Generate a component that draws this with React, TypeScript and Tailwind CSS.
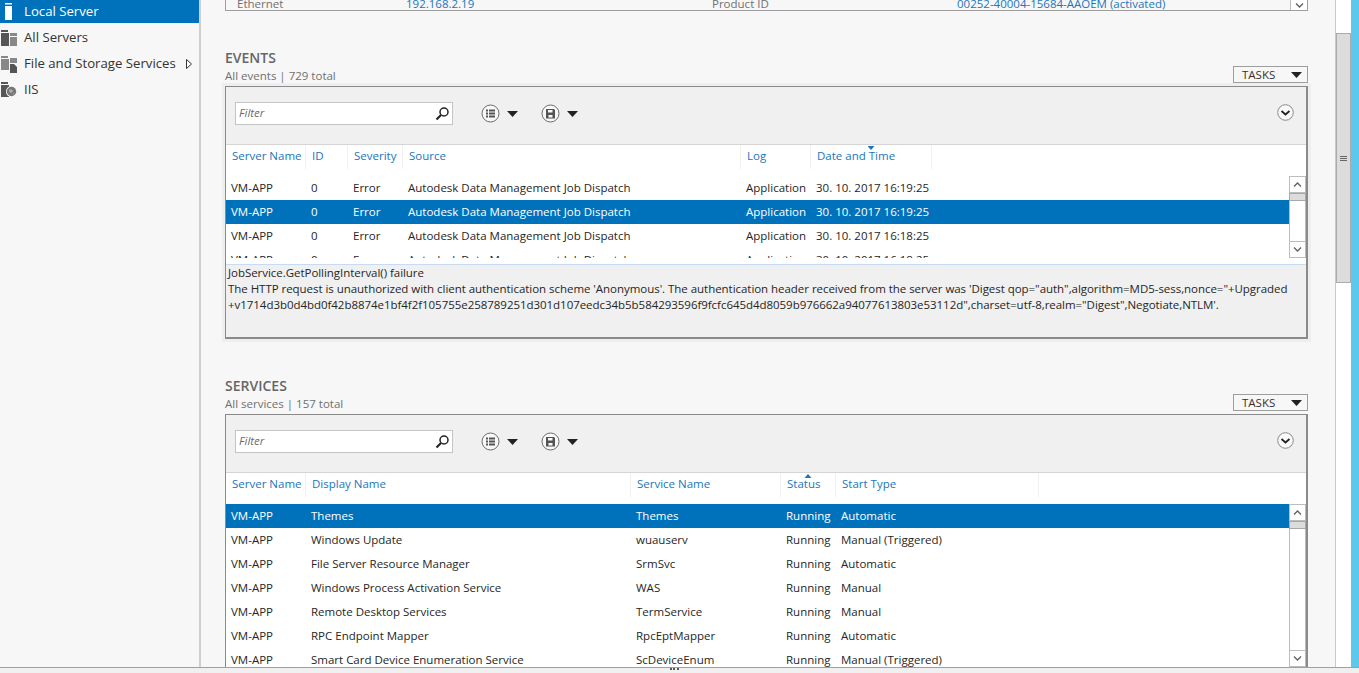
const FONT = "font-['Open_Sans','Noto_Sans',sans-serif]";

type Col = { label: string; sort?: "up" | "down" };

const eventCols: Col[] = [
  { label: "Server Name" },
  { label: "ID" },
  { label: "Severity" },
  { label: "Source" },
  { label: "Log" },
  { label: "Date and Time", sort: "down" },
];

const serviceCols: Col[] = [
  { label: "Server Name" },
  { label: "Display Name" },
  { label: "Service Name" },
  { label: "Status", sort: "up" },
  { label: "Start Type" },
];

const eventRows = [
  { cells: ["VM-APP", "0", "Error", "Autodesk Data Management Job Dispatch", "Application", "30. 10. 2017 16:19:25"] },
  { cells: ["VM-APP", "0", "Error", "Autodesk Data Management Job Dispatch", "Application", "30. 10. 2017 16:19:25"], selected: true },
  { cells: ["VM-APP", "0", "Error", "Autodesk Data Management Job Dispatch", "Application", "30. 10. 2017 16:18:25"] },
  { cells: ["VM-APP", "0", "Error", "Autodesk Data Management Job Dispatch", "Application", "30. 10. 2017 16:18:25"] },
];

const serviceRows = [
  { cells: ["VM-APP", "Themes", "Themes", "Running", "Automatic"], selected: true },
  { cells: ["VM-APP", "Windows Update", "wuauserv", "Running", "Manual (Triggered)"] },
  { cells: ["VM-APP", "File Server Resource Manager", "SrmSvc", "Running", "Automatic"] },
  { cells: ["VM-APP", "Windows Process Activation Service", "WAS", "Running", "Manual"] },
  { cells: ["VM-APP", "Remote Desktop Services", "TermService", "Running", "Manual"] },
  { cells: ["VM-APP", "RPC Endpoint Mapper", "RpcEptMapper", "Running", "Automatic"] },
  { cells: ["VM-APP", "Smart Card Device Enumeration Service", "ScDeviceEnum", "Running", "Manual (Triggered)"] },
];

function Caret({ className = "" }: { className?: string }) {
  return (
    <svg width="11" height="6" viewBox="0 0 11 6" className={className}>
      <path d="M0 0h11L5.5 6z" fill="#222" />
    </svg>
  );
}

function Toolbar() {
  return (
    <div className="h-[58px] shrink-0 bg-[#f0f0f0] border-b border-[#d5d5d5] flex items-start pt-[15px] pl-[9px] pr-[12px]">
      <div className="w-[218px] h-[23px] bg-white border border-[#c4c4c4] flex items-center justify-between pl-[3px] pr-[2px]">
        <span className="text-[11.5px] italic text-[#6d6d6d] pb-[2px]">Filter</span>
        <svg width="15" height="15" viewBox="0 0 15 15">
          <circle cx="9" cy="6" r="4" fill="none" stroke="#222" strokeWidth="1.5" />
          <path d="M6 9l-4.5 4.5" stroke="#222" strokeWidth="2.2" />
        </svg>
      </div>
      <div className="ml-[28px] mt-[2px] flex items-center gap-[7px]">
        <svg width="19" height="19" viewBox="0 0 19 19">
          <circle cx="9.5" cy="9.5" r="8.5" fill="#f8f8f8" stroke="#6a6a6a" />
          <path d="M5 5.500h2v2H5zM5 8.500h2v2H5zM5 11.500h2v2H5z" fill="#555" />
          <path d="M8 5.500h6v2H8zM8 8.500h6v2H8zM8 11.500h6v2H8z" fill="#555" />
        </svg>
        <Caret />
      </div>
      <div className="ml-[23px] mt-[2px] flex items-center gap-[7px]">
        <svg width="19" height="19" viewBox="0 0 19 19">
          <circle cx="9.5" cy="9.5" r="8.5" fill="#f8f8f8" stroke="#6a6a6a" />
          <path d="M5 5h8l1 1v8.500H5z" fill="#555" />
          <path d="M7 6h4.500v2.500H7z" fill="#f8f8f8" />
          <path d="M7.500 11H11.500V13.500H7.500z" fill="#f8f8f8" />
        </svg>
        <Caret />
      </div>
      <div className="ml-auto mt-[2px]">
        <svg width="17" height="17" viewBox="0 0 17 17">
          <circle cx="8.500" cy="8.500" r="7.800" fill="#f8f8f8" stroke="#8a8a8a" />
          <path d="M4.500 7l4 3.500 4-3.500" fill="none" stroke="#222" strokeWidth="1.800" />
        </svg>
      </div>
    </div>
  );
}

function Header({ cols, grid }: { cols: Col[]; grid: string }) {
  return (
    <div className={`grid ${grid} h-[31px] shrink-0 bg-white`}>
      {cols.map((c) => (
        <div key={c.label} className="relative h-[24px] border-r border-[#f0f0f0] pl-[6px] pt-[2px] text-[11.5px] text-[#1a76bd] whitespace-nowrap">
          {c.sort && (
            <svg width="7" height="4" viewBox="0 0 7 4" className="absolute left-1/2 -translate-x-1/2 top-[1px]">
              <path d={c.sort === "down" ? "M0 0h7L3.500 4z" : "M0 4h7L3.500 0z"} fill="#1a76bd" />
            </svg>
          )}
          {c.label}
        </div>
      ))}
    </div>
  );
}

function VScroll({ className }: { className: string }) {
  return (
    <div className={`w-[17px] shrink-0 border-x border-[#bdbdbd] bg-white flex flex-col ${className}`}>
      <div className="h-[17px] shrink-0 border-y border-[#bdbdbd] flex items-center justify-center">
        <svg width="9" height="5" viewBox="0 0 9 5">
          <path d="M1 4.500l3.500-3.500 3.500 3.500" fill="none" stroke="#606060" strokeWidth="1.300" />
        </svg>
      </div>
      <div className="h-2 shrink-0 bg-[#dcdcdc] border border-[#a8a8a8] -mx-px" />
      <div className="flex-1" />
      <div className="h-[17px] shrink-0 border-y border-[#bdbdbd] flex items-center justify-center">
        <svg width="9" height="5" viewBox="0 0 9 5">
          <path d="M1 .5l3.500 3.500 3.500-3.500" fill="none" stroke="#606060" strokeWidth="1.300" />
        </svg>
      </div>
    </div>
  );
}

function Rows({ rows, grid, className = "" }: { rows: { cells: string[]; selected?: boolean }[]; grid: string; className?: string }) {
  return (
    <div className={`flex-1 min-w-0 overflow-hidden ${className}`}>
      {rows.map((r, i) => (
        <div
          key={i}
          className={`grid ${grid} h-6 items-center text-[11.5px] whitespace-nowrap ${r.selected ? "bg-[#0072bc] text-white" : "text-[#262626]"}`}
        >
          {r.cells.map((c, j) => (
            <div key={j} className="pl-[5px] overflow-visible">{c}</div>
          ))}
        </div>
      ))}
    </div>
  );
}

function SectionHead({ title, sub }: { title: string; sub: string }) {
  return (
    <div className="flex items-end justify-between h-[41px]">
      <div>
        <div className="text-[14px] leading-[18px] font-semibold text-[#666]">{title}</div>
        <div className="text-[11.5px] leading-[17px] text-[#707070] mb-[2px]">{sub}</div>
      </div>
      <div className="w-[75px] h-[17px] border border-[#9e9e9e] flex items-center justify-between pl-2 pr-[5px] text-[11.5px] text-[#333] mb-[3px]">
        TASKS
        <Caret />
      </div>
    </div>
  );
}

function NavIcon({ kind }: { kind: string }) {
  if (kind === "local") {
    return (
      <svg width="18" height="17" viewBox="0 0 18 17">
        <path d="M4 0h7v1.500H4zM4 3h7v14H4z" fill="#fff" />
      </svg>
    );
  }
  if (kind === "all") {
    return (
      <svg width="18" height="17" viewBox="0 0 18 17">
        <path d="M0 0h7v2H0z" fill="#555" />
        <path d="M0 3h8v13H0z" fill="#555" />
        <path d="M9 3h7v3H9z" fill="#888" />
        <path d="M9 7h7v9H9z" fill="#888" />
      </svg>
    );
  }
  if (kind === "files") {
    return (
      <svg width="18" height="17" viewBox="0 0 18 17">
        <path d="M0 0h7v2H0z" fill="#888" />
        <path d="M0 3h8v11H0z" fill="#888" />
        <path d="M9 2h7v5h-7z" fill="#888" />
        <path d="M9 8h4l3 3v6H9z" fill="#555" />
      </svg>
    );
  }
  return (
    <svg width="18" height="17" viewBox="0 0 18 17">
      <path d="M0 0h7v2H0z" fill="#555" />
      <path d="M0 3h8v12H0z" fill="#555" />
      <circle cx="10.500" cy="9.500" r="5.500" fill="#f7f7f7" />
      <circle cx="10.500" cy="9.500" r="4.700" fill="#777" />
      <path d="M8 7.500h3l1 2-2 1.500-1.500-1zM12 11.500h1.500l-1 1.500z" fill="#b0b0b0" />
    </svg>
  );
}

function NavItem({ kind, label, active, arrow }: { kind: string; label: string; active?: boolean; arrow?: boolean }) {
  return (
    <div className={`flex items-center text-[13.2px] pl-[1px] whitespace-nowrap ${active ? "h-[24px] mb-[2px] pt-[1px] bg-[#0072bc] text-white" : "h-[26px] text-[#333]"}`}>
      <div className="w-[23px]"><NavIcon kind={kind} /></div>
      <span>{label}</span>
      {arrow && (
        <svg width="6" height="10" viewBox="0 0 6 10" className="ml-[10px]">
          <path d="M.5.5l5 4.500-5 4.500z" fill="#fff" stroke="#333" />
        </svg>
      )}
    </div>
  );
}

const eventGrid = "grid-cols-[80px_42px_55px_338px_70px_121px_1fr]";
const serviceGrid = "grid-cols-[80px_325px_150px_55px_203px_1fr]";

export default function App() {
  return (
    <div className={`${FONT} w-[1359px] h-[673px] overflow-hidden flex flex-col bg-white`}>
      <div className="flex h-[667px]">
        <aside className="w-[201px] shrink-0 bg-[#f7f7f7] border-r-2 border-[#d0d0d0] -mt-[1px]">
          <NavItem kind="local" label="Local Server" active />
          <NavItem kind="all" label="All Servers" />
          <NavItem kind="files" label="File and Storage Services" arrow />
          <NavItem kind="iis" label="IIS" />
        </aside>

        <main className="w-[1135px] shrink-0 bg-[#f7f7f7] border-r border-[#c8c8c8] pl-[24px] pr-[27px] overflow-hidden">
          {/* clipped properties panel */}
          <div className="h-[11px] border-x border-b border-[#9e9e9e] flex overflow-hidden text-[11.5px] leading-[8px] whitespace-nowrap">
            <div className="grid grid-cols-[169px_306px_245px_1fr] flex-1 pl-[11px]">
              <span className="text-[#707070]">Ethernet</span>
              <span className="text-[#1a76bd]">192.168.2.19</span>
              <span className="text-[#707070]">Product ID</span>
              <span className="text-[#1a76bd]">00252-40004-15684-AAOEM (activated)</span>
            </div>
            <div className="w-[17px] bg-white border-l border-[#bdbdbd] flex items-center justify-center">
              <svg width="9" height="5" viewBox="0 0 9 5">
                <path d="M1 .5l3.500 3.500 3.500-3.500" fill="none" stroke="#606060" strokeWidth="1.300" />
              </svg>
            </div>
          </div>

          <div className="mt-[34px]">
            <SectionHead title="EVENTS" sub="All events | 729 total" />
          </div>
          <div className="h-[253px] border-2 border-[#8a8a8a] border-t-[1px] border-l-[1px] shadow-[0_0_0_3px_#eeeeee] flex flex-col">
            <Toolbar />
            <Header cols={eventCols} grid={eventGrid} />
            <div className="h-[89px] shrink-0 bg-white flex border-b border-[#c5dcf2] overflow-hidden">
              <Rows rows={eventRows} grid={eventGrid} className="h-[82px]" />
              <VScroll className="h-[82px]" />
            </div>
            <div className="flex-1 bg-[#f0f0f0] px-[2px] text-[11.5px] tracking-[-0.04px] leading-4 text-[#262626] whitespace-nowrap overflow-hidden">
              <div>JobService.GetPollingInterval() failure</div>
              <div>The HTTP request is unauthorized with client authentication scheme 'Anonymous'. The authentication header received from the server was 'Digest qop="auth",algorithm=MD5-sess,nonce="+Upgraded</div>
              <div>+v1714d3b0d4bd0f42b8874e1bf4f2f105755e258789251d301d107eedc34b5b584293596f9fcfc645d4d8059b976662a94077613803e53112d",charset=utf-8,realm="Digest",Negotiate,NTLM'.</div>
            </div>
          </div>

          <div className="mt-[34px]">
            <SectionHead title="SERVICES" sub="All services | 157 total" />
          </div>
          <div className="h-[253px] border-l border-r-2 border-t border-[#8a8a8a] flex flex-col">
            <Toolbar />
            <Header cols={serviceCols} grid={serviceGrid} />
            <div className="h-[163px] shrink-0 bg-white flex overflow-hidden">
              <Rows rows={serviceRows} grid={serviceGrid} />
              <VScroll className="h-[163px]" />
            </div>
          </div>
        </main>

        <div className="w-[15px] shrink-0 bg-white flex flex-col pt-[33px]">
          <div className="h-[250px] bg-[#dcdcdc] border border-[#ababab] flex flex-col items-center justify-center gap-[1px]">
            <div className="w-[7px] h-[1px] bg-[#666]" />
            <div className="w-[7px] h-[1px] bg-[#666]" />
            <div className="w-[7px] h-[1px] bg-[#666]" />
          </div>
        </div>
        <div className="w-2 shrink-0 bg-[#5cc8ec]" />
      </div>

      <div className="h-[6px] bg-[#f0f0f0] border-t border-[#a0a0a0] flex justify-center">
        <div className="w-[9px] h-[2px] ml-[-10px] border-t-2 border-dotted border-[#555]" />
      </div>
    </div>
  );
}
